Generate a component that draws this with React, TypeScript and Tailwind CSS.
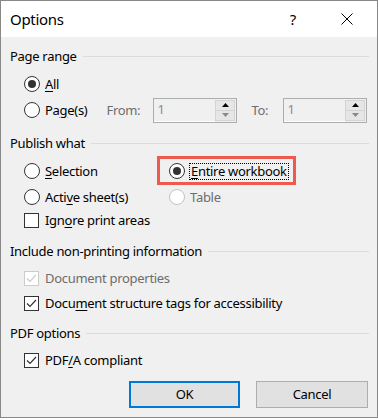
import React from 'react';

const font = { fontFamily: '"Noto Sans", "Open Sans", sans-serif' };

const Radio: React.FC<{ checked?: boolean; disabled?: boolean }> = ({ checked, disabled }) => (
  <svg width="16" height="16" viewBox="0 0 16 16" className="shrink-0">
    <circle cx="8" cy="8" r="7.5" fill="#fff" stroke={disabled ? '#c2c2c2' : '#333'} strokeWidth="1" />
    {checked && <circle cx="8" cy="8" r="4" fill="#333" />}
  </svg>
);

const Check: React.FC<{ checked?: boolean; disabled?: boolean }> = ({ checked, disabled }) => (
  <svg width="15" height="15" viewBox="0 0 15 15" className="shrink-0">
    <rect x="0.5" y="0.5" width="14" height="14" fill="#fff" stroke={disabled ? '#cccccc' : '#333'} />
    {checked && (
      <path d="M3 7.5 L6 10.5 L12 4" fill="none" stroke={disabled ? '#cccccc' : '#333'} strokeWidth="1.2" />
    )}
  </svg>
);

const Heading: React.FC<{ label: string; mt: string }> = ({ label, mt }) => (
  <div className={`flex items-center h-[20px] ${mt}`}>
    <span className="text-black">{label}</span>
    <div className="flex-1 ml-[6px] h-px bg-[#dcdcdc]" />
  </div>
);

const Spin: React.FC = () => (
  <div className="flex w-[84px] h-[25px] border border-[#adadad] bg-[#f0f0f0]">
    <div className="flex-1 flex items-center pl-[3px] text-[#8a8a8a] border-b border-white">1</div>
    <div className="w-[20px] flex flex-col my-px mr-px">
      <div className="flex-1 flex items-center justify-center bg-[#e6e6e6] border border-[#d4d4d4]">
        <svg width="7" height="4" viewBox="0 0 7 4"><path d="M0 4 L3.5 0 L7 4 Z" fill="#000" /></svg>
      </div>
      <div className="flex-1 flex items-center justify-center bg-[#e6e6e6] border border-t-0 border-[#d4d4d4]">
        <svg width="7" height="4" viewBox="0 0 7 4"><path d="M0 0 L3.5 4 L7 0 Z" fill="#8a8a8a" /></svg>
      </div>
    </div>
  </div>
);

const U: React.FC<{ children: React.ReactNode }> = ({ children }) => <span className="underline underline-offset-2">{children}</span>;

export default function App() {
  return (
    <div className="bg-white w-[378px] h-[420px] text-[13px] leading-none tracking-[-0.3px]" style={font}>
      <div className="w-[378px] h-[418px] border border-[#888] flex flex-col">
        <div className="h-[36px] bg-white flex items-center pl-[9px] pr-[24px]">
          <span className="text-[15px] text-black">Options</span>
          <span className="ml-auto text-[15px] text-black">?</span>
          <svg width="12" height="12" viewBox="0 0 12 12" className="ml-[45px]">
            <path d="M0.5 0.5 L11.5 11.5 M11.5 0.5 L0.5 11.5" stroke="#000" strokeWidth="1" />
          </svg>
        </div>
        <div className="flex-1 bg-[#f0f0f0] flex flex-col pl-[9px] pr-[8px] pt-[9px]">
          <Heading label="Page range" mt="" />
          <div className="flex items-center h-[20px] mt-[8px] pl-[14px] gap-[5px]">
            <Radio checked />
            <span><U>A</U>ll</span>
          </div>
          <div className="flex items-center h-[26px] mt-[3px] pl-[14px]">
            <Radio />
            <span className="ml-[5px]">Pa<U>g</U>e(s)</span>
            <span className="ml-[19px] text-[#6d6d6d] w-[47px]">From:</span>
            <Spin />
            <span className="ml-[14px] text-[#6d6d6d] w-[32px]">To:</span>
            <Spin />
          </div>
          <Heading label="Publish what" mt="mt-[10px]" />
          <div className="flex items-center h-[20px] mt-[8px] pl-[14px]">
            <div className="w-[145px] flex items-center gap-[5px]">
              <Radio />
              <span><U>S</U>election</span>
            </div>
            <div className="relative flex items-center gap-[4px]">
              <Radio checked />
              <span className="border border-dotted border-black px-px py-[1px]"><U>E</U>ntire workbook</span>
              <div className="absolute left-[-12px] top-[-7px] w-[139px] h-[29px] border-[3px] border-[#ef5a4f]" />
            </div>
          </div>
          <div className="flex items-center h-[20px] mt-[6px] pl-[14px]">
            <div className="w-[145px] flex items-center gap-[5px]">
              <Radio />
              <span>Acti<U>v</U>e sheet(s)</span>
            </div>
            <div className="flex items-center gap-[5px]">
              <Radio disabled />
              <span className="text-[#6d6d6d]">Table</span>
            </div>
          </div>
          <div className="flex items-center h-[20px] mt-[3px] pl-[14px] gap-[6px]">
            <Check />
            <span>Ign<U>o</U>re print areas</span>
          </div>
          <Heading label="Include non-printing information" mt="mt-[11px]" />
          <div className="flex items-center h-[20px] mt-[7px] pl-[14px] gap-[6px]">
            <Check checked disabled />
            <span className="text-[#6d6d6d]">Document properties</span>
          </div>
          <div className="flex items-center h-[20px] mt-[5px] pl-[14px] gap-[6px]">
            <Check checked />
            <span>Docu<U>m</U>ent structure tags for accessibility</span>
          </div>
          <Heading label="PDF options" mt="mt-[10px]" />
          <div className="flex items-center h-[20px] mt-[7px] pl-[14px] gap-[6px]">
            <Check checked />
            <span>PDF<U>/</U>A compliant</span>
          </div>
          <div className="flex justify-end gap-[16px] mt-[11px] pr-[1px]">
            <button className="w-[111px] h-[27px] bg-[#e1e1e1] border-2 border-[#0078d7] text-black">OK</button>
            <button className="w-[112px] h-[27px] bg-[#e1e1e1] border border-[#adadad] text-black">Cancel</button>
          </div>
        </div>
      </div>
    </div>
  );
}
